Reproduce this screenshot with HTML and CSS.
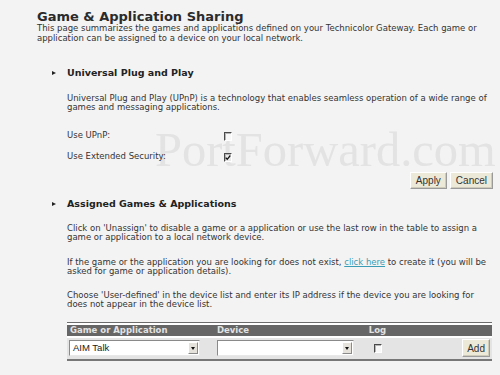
FILE: index.html
```html
<!DOCTYPE html>
<html lang="en">
<head>
    <meta charset="UTF-8">
    <meta name="viewport" content="width=device-width, initial-scale=1.0">
    <title>Game &amp; Application Sharing</title>
    <link rel="stylesheet" href="styles.css">
</head>
<body>

    <div class="watermark">PortForward.com</div>

    <div class="page">
        <h1>Game &amp; Application Sharing</h1>
        <p class="intro">This page summarizes the games and applications defined on your Technicolor Gateway. Each game or application can be assigned to a device on your local network.</p>

        <!-- Universal Plug and Play -->
        <div class="section upnp">
            <h2 class="section-title"><span class="arrow"></span>Universal Plug and Play</h2>
            <p>Universal Plug and Play (UPnP) is a technology that enables seamless operation of a wide range of games and messaging applications.</p>

            <div class="options">
                <div class="option">
                    <span class="option-label">Use UPnP:</span>
                    <span class="chk"></span>
                </div>
                <div class="option">
                    <span class="option-label">Use Extended Security:</span>
                    <span class="chk checked">
                        <svg width="7" height="7" viewBox="0 0 7 7"><path d="M0.8 3.6 L2.6 5.6 L6.2 1.2" fill="none" stroke="#111" stroke-width="1.5"/></svg>
                    </span>
                </div>
            </div>

            <div class="actions">
                <button class="btn">Apply</button>
                <button class="btn">Cancel</button>
            </div>
        </div>

        <!-- Assigned Games & Applications -->
        <div class="section games">
            <h2 class="section-title"><span class="arrow"></span>Assigned Games &amp; Applications</h2>
            <p>Click on 'Unassign' to disable a game or a application or use the last row in the table to assign a game or application to a local network device.</p>
            <p>If the game or the application you are looking for does not exist, <a href="#">click here</a> to create it (you will be asked for game or application details).</p>
            <p>Choose 'User-defined' in the device list and enter its IP address if the device you are looking for does not appear in the device list.</p>

            <div class="game-table">
                <div class="game-head">
                    <span class="col-game">Game or Application</span>
                    <span class="col-device">Device</span>
                    <span class="col-log">Log</span>
                    <span class="col-add"></span>
                </div>
                <div class="game-row">
                    <div class="col-game">
                        <div class="select select-game"><span class="select-value">AIM Talk</span><span class="drop"></span></div>
                    </div>
                    <div class="col-device">
                        <div class="select select-device"><span class="select-value"></span><span class="drop"></span></div>
                    </div>
                    <div class="col-log"><span class="chk"></span></div>
                    <div class="col-add"><button class="btn">Add</button></div>
                </div>
            </div>
        </div>
    </div>

</body>
</html>
```

FILE: styles.css
```css
* {
    margin: 0;
    padding: 0;
    box-sizing: border-box;
}

body {
    font-family: 'DejaVu Sans', Verdana, sans-serif;
    font-size: 8.5px;
    line-height: 9.5px;
    color: #333;
    background-color: #f3f3f3;
}

.watermark {
    position: absolute;
    left: 155px;
    top: 126px;
    z-index: -1;
    font-family: 'Liberation Serif', 'Times New Roman', serif;
    font-size: 48.5px;
    line-height: 48px;
    color: #e3e3e3;
    white-space: nowrap;
}

.page {
    padding: 9px 7px 0 37px;
}

h1 {
    font-size: 13px;
    line-height: 15px;
    font-weight: bold;
    color: #2b2b2b;
}

.section {
    padding-left: 30px;
}

.section-title {
    display: flex;
    align-items: center;
    margin-left: -15px;
    font-size: 9.5px;
    line-height: 12px;
    font-weight: bold;
    color: #222;
}

.arrow {
    width: 0;
    height: 0;
    margin-right: 11px;
    border-left: 4px solid #222;
    border-top: 2.5px solid transparent;
    border-bottom: 2.5px solid transparent;
}

a {
    color: #3b9db5;
}

/* UPnP block */
.upnp {
    margin-top: 24px;
}

.upnp .section-title {
    margin-bottom: 14.5px;
}

.options {
    margin-top: 13px;
}

.option {
    display: flex;
    align-items: center;
    height: 21px;
}

.option-label {
    width: 157px;
}

.chk {
    display: inline-flex;
    align-items: center;
    justify-content: center;
    width: 8px;
    height: 9px;
    background-color: #f8f8f8;
    border-top: 1px solid #4a4a4a;
    border-left: 1px solid #4a4a4a;
    border-right: 1px solid #fff;
    border-bottom: 1px solid #fff;
    box-shadow: inset 1px 1px 0 #b5b5b5;
}

.chk.checked {
    background-color: #e9e9e9;
}

.actions {
    display: flex;
    justify-content: flex-end;
    gap: 3px;
    margin-top: 4px;
}

.btn {
    height: 17px;
    padding: 0 5px;
    font-family: 'Liberation Sans', Arial, sans-serif;
    font-size: 10px;
    color: #333;
    background-color: #ece9d8;
    border: 1px solid;
    border-color: #fff #9a9a9a #9a9a9a #fff;
    box-shadow: inset -1px -1px 0 #cfcbbb;
}

/* Assigned games block */
.games {
    margin-top: 9.5px;
}

.games .section-title {
    margin-bottom: 13.5px;
}

.games p + p {
    margin-top: 15px;
}

.games p:nth-of-type(3) {
    margin-top: 14px;
}

.game-table {
    margin-top: 12px;
    margin-right: 1px;
    padding-top: 2px;
    background-color: #fff;
    border-top: 1px solid #6c6c6c;
    border-bottom: 2px solid #777;
}

.game-head,
.game-row {
    display: grid;
    grid-template-columns: 147px 146px 35px 1fr;
    align-items: center;
}

.game-head {
    height: 11px;
    margin-bottom: 2px;
    background-color: #666;
    color: #e2e2e2;
    font-size: 8.5px;
    line-height: 11px;
    font-weight: bold;
}

.game-head .col-game,
.game-head .col-device {
    padding-left: 3px;
}

.col-log {
    display: flex;
    justify-content: center;
}

.game-row {
    height: 21px;
    background-color: #e4e4e4;
}

.game-row .col-game {
    padding-left: 2px;
}

.game-row .col-device {
    padding-left: 3px;
}

.col-add {
    display: flex;
    justify-content: flex-end;
    padding-right: 2px;
}

.game-row .btn {
    height: 18px;
    padding: 0 4px;
}

.select {
    display: flex;
    align-items: center;
    height: 16px;
    background-color: #fff;
    border: 1px solid;
    border-color: #8a8a8a #e8e8e8 #e8e8e8 #8a8a8a;
}

.select-game {
    width: 131px;
}

.select-device {
    width: 137px;
}

.select-value {
    flex: 1;
    padding-left: 3px;
    font-family: 'Liberation Sans', Arial, sans-serif;
    font-size: 9.5px;
    color: #222;
}

.drop {
    display: flex;
    align-items: center;
    justify-content: center;
    width: 10px;
    height: 12px;
    margin-right: 1px;
    background-color: #e4e2da;
    border: 1px solid;
    border-color: #fff #8a8a8a #8a8a8a #fff;
}

.drop::after {
    content: "";
    border-top: 3px solid #111;
    border-left: 2.5px solid transparent;
    border-right: 2.5px solid transparent;
}
```
